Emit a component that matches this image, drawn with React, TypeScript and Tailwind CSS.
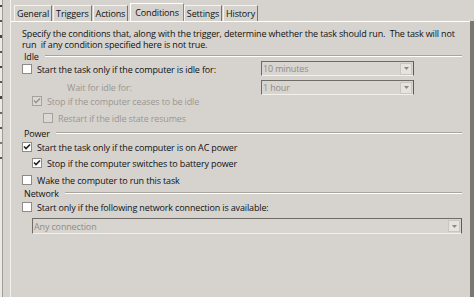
import React from 'react';

const font = { fontFamily: '"Open Sans", "DejaVu Sans", sans-serif' };

function Tab({ label, active }: { label: string; active?: boolean }) {
  if (active) {
    return (
      <div className="-mb-px flex h-[19px] items-center border-t border-l border-white border-r border-r-[#8a8781] bg-[#d6d3ce] px-[4px] text-[9px] tracking-[-0.15px] text-[#111]">
        {label}
      </div>
    );
  }
  return (
    <div className="flex h-[16px] items-center border-t border-l border-[#f4f2ee] border-r border-r-[#77746f] px-[2px] text-[9px] tracking-[-0.15px] text-[#111]">
      {label}
    </div>
  );
}

function Box({ checked, disabled }: { checked?: boolean; disabled?: boolean }) {
  return (
    <span
      className={`flex h-[10px] w-[10px] shrink-0 items-center justify-center border ${
        disabled ? 'border-[#a5a29c] bg-[#dcd9d4]' : 'border-[#8e8b86] bg-white'
      }`}
    >
      {checked && (
        <svg width="8" height="8" viewBox="0 0 8 8">
          <path
            d="M1 3.5 L3 5.5 L7 1.5"
            fill="none"
            stroke={disabled ? '#9a9792' : '#222'}
            strokeWidth="1.6"
          />
        </svg>
      )}
    </span>
  );
}

function Check({
  label,
  checked,
  disabled,
  indent = 0,
}: {
  label: string;
  checked?: boolean;
  disabled?: boolean;
  indent?: number;
}) {
  return (
    <div className="flex h-[10px] items-center gap-[5px]" style={{ paddingLeft: indent }}>
      <Box checked={checked} disabled={disabled} />
      <span className={`text-[9px] leading-none tracking-[-0.15px] ${disabled ? 'text-[#9a9792]' : 'text-[#111]'}`}>
        {label}
      </span>
    </div>
  );
}

function Group({ label }: { label: string }) {
  return (
    <div className="flex h-[10px] items-center gap-[6px] pl-[2px] text-[9px] leading-none tracking-[-0.15px] text-[#111]">
      <span>{label}</span>
      <div className="h-[2px] flex-1 border-t border-[#a8a59f] border-b border-b-white" />
    </div>
  );
}

function Select({ value, className }: { value: string; className: string }) {
  return (
    <div
      className={`flex items-center border border-t-[#6f6c67] border-l-[#6f6c67] border-r-[#5c5a56] border-b-[#f2f0ec] bg-[#d8d5d0] pl-[1px] pr-[1px] ${className}`}
    >
      <span className="flex-1 text-[9px] leading-none tracking-[-0.15px] text-[#8f8c87]">{value}</span>
      <span className="flex h-[12px] w-[12px] items-center justify-center border border-[#c9c6c1] bg-[#e6e3df]">
        <svg width="5" height="3" viewBox="0 0 5 3">
          <path d="M0 0 H5 L2.5 3 Z" fill="#8a8782" />
        </svg>
      </span>
    </div>
  );
}

export default function App() {
  return (
    <div className="flex h-[297px] w-[474px] overflow-hidden bg-[#d6d3ce]" style={font}>
      <div className="flex w-[11px] shrink-0">
        <div className="flex w-[2px] flex-col gap-[13px] bg-[#ebe9e5] pt-[5px]">
          <div className="h-[2px] bg-[#444]" />
          <div className="h-[2px] bg-[#555]" />
          <div className="h-[3px] bg-[#444]" />
          <div className="h-[2px] bg-[#555]" />
          <div className="h-[2px] bg-[#444]" />
          <div className="h-[2px] bg-[#555]" />
          <div className="h-[3px] bg-[#444]" />
          <div className="h-[2px] bg-[#666]" />
          <div className="h-[2px] bg-[#555]" />
          <div className="h-[2px] bg-[#777]" />
          <div className="h-[2px] bg-[#555]" />
        </div>
        <div className="w-px bg-[#a09d98]" />
        <div className="flex-1" />
        <div className="w-px bg-[#f3f1ed]" />
      </div>

      <div className="flex flex-1 flex-col">
        <div className="flex h-[21px] items-end pl-[3px]">
          <Tab label="General" />
          <div className="w-px" />
          <Tab label="Triggers" />
          <div className="w-px" />
          <Tab label="Actions" />
          <div className="w-[2px]" />
          <Tab label="Conditions" active />
          <Tab label="Settings" />
          <div className="w-px" />
          <Tab label="History" />
        </div>

        <div className="flex flex-1">
          <div className="flex flex-1 flex-col border-t border-white pl-[11px] pr-[8px] pt-[6px]">
            <div className="text-[9px] leading-[11px] tracking-[-0.15px] text-[#111]">
              <div className="h-[11px] whitespace-nowrap">
                Specify the conditions that, along with the trigger, determine whether the task should run.&nbsp; The task will not
              </div>
              <div className="h-[11px] whitespace-nowrap">run&nbsp; if any condition specified here is not true.</div>
            </div>

            <div className="mt-[1px]">
              <Group label="Idle" />
            </div>

            <div className="flex items-start">
              <div className="w-[239px] pt-[3px]">
                <Check label="Start the task only if the computer is idle for:" />
              </div>
              <Select value="10 minutes" className="h-[15px] w-[153px]" />
            </div>

            <div className="mt-[4px] flex items-center">
              <span className="w-[239px] pl-[45px] text-[9px] leading-none tracking-[-0.15px] text-[#9a9792]">
                Wait for idle for:
              </span>
              <Select value="1 hour" className="h-[15px] w-[153px]" />
            </div>

            <div className="mt-[1px]">
              <Check label="Stop if the computer ceases to be idle" checked disabled indent={10} />
            </div>
            <div className="mt-[7px]">
              <Check label="Restart if the idle state resumes" disabled indent={21} />
            </div>

            <div className="mt-[5px]">
              <Group label="Power" />
            </div>
            <div className="mt-[4px]">
              <Check label="Start the task only if the computer is on AC power" checked />
            </div>
            <div className="mt-[6px]">
              <Check label="Stop if the computer switches to battery power" checked indent={10} />
            </div>
            <div className="mt-[7px]">
              <Check label="Wake the computer to run this task" />
            </div>

            <div className="mt-[3px]">
              <Group label="Network" />
            </div>
            <div className="mt-[4px]">
              <Check label="Start only if the following network connection is available:" />
            </div>
            <div className="mt-[6px] pl-[10px]">
              <Select value="Any connection" className="h-[16px] w-full" />
            </div>
          </div>
          <div className="w-[4px] shrink-0 bg-[#7b7873]" />
        </div>
      </div>
    </div>
  );
}
